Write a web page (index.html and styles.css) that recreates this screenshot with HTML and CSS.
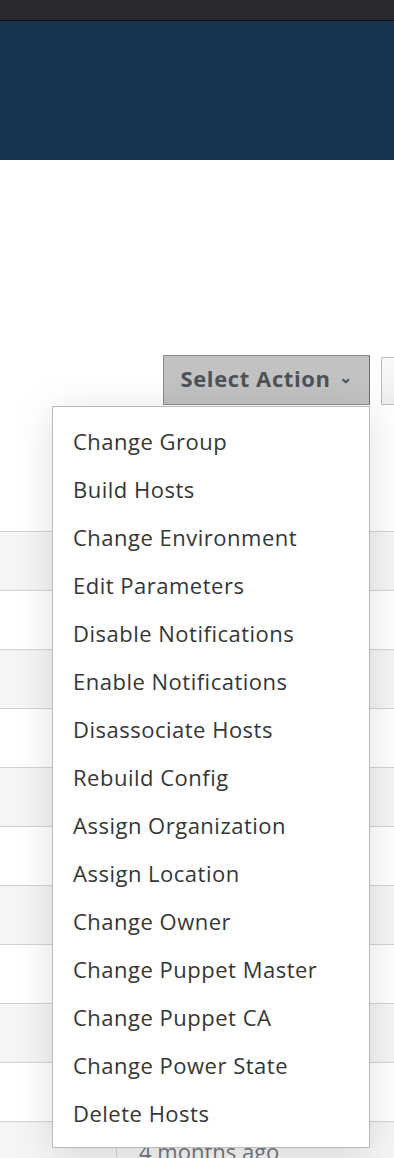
FILE: index.html
```html
<!DOCTYPE html>
<html lang="en">
<head>
  <meta charset="UTF-8">
  <meta name="viewport" content="width=device-width, initial-scale=1.0">
  <title>Hosts</title>
  <link rel="stylesheet" href="styles.css">
</head>
<body>

  <div class="topbar"></div>
  <header class="banner"></header>

  <main class="content">
    <div class="toolbar">
      <div class="actions">
        <button class="btn btn-select">Select Action <span class="caret">&#8964;</span></button>
        <ul class="menu">
          <li>Change Group</li>
          <li>Build Hosts</li>
          <li>Change Environment</li>
          <li>Edit Parameters</li>
          <li>Disable Notifications</li>
          <li>Enable Notifications</li>
          <li>Disassociate Hosts</li>
          <li>Rebuild Config</li>
          <li>Assign Organization</li>
          <li>Assign Location</li>
          <li>Change Owner</li>
          <li>Change Puppet Master</li>
          <li>Change Puppet CA</li>
          <li>Change Power State</li>
          <li>Delete Hosts</li>
        </ul>
      </div>
      <button class="btn btn-other"></button>
    </div>

    <div class="hosts">
      <div class="hosts-head"></div>
      <div class="row"><span class="cell first"></span><span class="cell"></span></div>
      <div class="row"><span class="cell first"></span><span class="cell"></span></div>
      <div class="row"><span class="cell first"></span><span class="cell"></span></div>
      <div class="row"><span class="cell first"></span><span class="cell"></span></div>
      <div class="row"><span class="cell first"></span><span class="cell"></span></div>
      <div class="row"><span class="cell first"></span><span class="cell"></span></div>
      <div class="row"><span class="cell first"></span><span class="cell"></span></div>
      <div class="row"><span class="cell first"></span><span class="cell"></span></div>
      <div class="row"><span class="cell first"></span><span class="cell"></span></div>
      <div class="row"><span class="cell first"></span><span class="cell"></span></div>
      <div class="row"><span class="cell first"></span><span class="cell">4 months ago</span></div>
    </div>
  </main>

</body>
</html>
```
FILE: styles.css
```css
body {
  margin: 0;
  padding: 0;
  font-family: "Open Sans", "Noto Sans", sans-serif;
  background: white;
  color: #363636;
  overflow: hidden;
}

.topbar {
  height: 20px;
  background: #2a2930;
  border-bottom: 1px solid #111;
}

.banner {
  height: 139px;
  background: #163350;
}

.toolbar {
  display: flex;
  align-items: flex-start;
  gap: 11px;
  padding: 195px 0 0 163px;
}

.actions {
  position: relative;
  flex-shrink: 0;
}

.btn {
  height: 50px;
  border-radius: 1px;
  font-family: inherit;
  cursor: pointer;
}

.btn-select {
  width: 207px;
  background: #c2c2c2;
  border: 1px solid #8c8c8c;
  border-right-color: #6f6f6f;
  color: #4d5258;
  font-size: 22px;
  font-weight: 700;
  letter-spacing: 0.6px;
  padding: 0 0 4px;
  white-space: nowrap;
}

.caret {
  display: inline-block;
  font-size: 16px;
  margin-left: 2px;
  position: relative;
  top: -4px;
}

.btn-other {
  width: 80px;
  flex-shrink: 0;
  margin-top: 2px;
  height: 48px;
  background: linear-gradient(#fafafa, #ededed);
  border: 1px solid #bbb;
}

.menu {
  position: absolute;
  top: 51px;
  right: 0;
  width: 318px;
  box-sizing: border-box;
  margin: 0;
  padding: 10px 0;
  list-style: none;
  background: white;
  border: 1px solid #bbb;
  box-shadow: 0 6px 36px rgba(0, 0, 0, 0.13);
  z-index: 10;
}

.menu li {
  height: 48px;
  line-height: 48px;
  padding-left: 20px;
  font-size: 22px;
  letter-spacing: 0.5px;
  color: #363636;
}

.hosts-head {
  height: 126px;
}

.row {
  display: flex;
  height: 58px;
  border-top: 1px solid #d1d1d1;
}

.row:nth-child(even) {
  background: #f5f5f5;
}

.cell {
  display: block;
}

.cell.first {
  width: 116px;
  border-right: 1px solid #d1d1d1;
}

.cell + .cell {
  padding: 14px 0 0 22px;
  font-size: 22px;
  color: #72767b;
}
```
